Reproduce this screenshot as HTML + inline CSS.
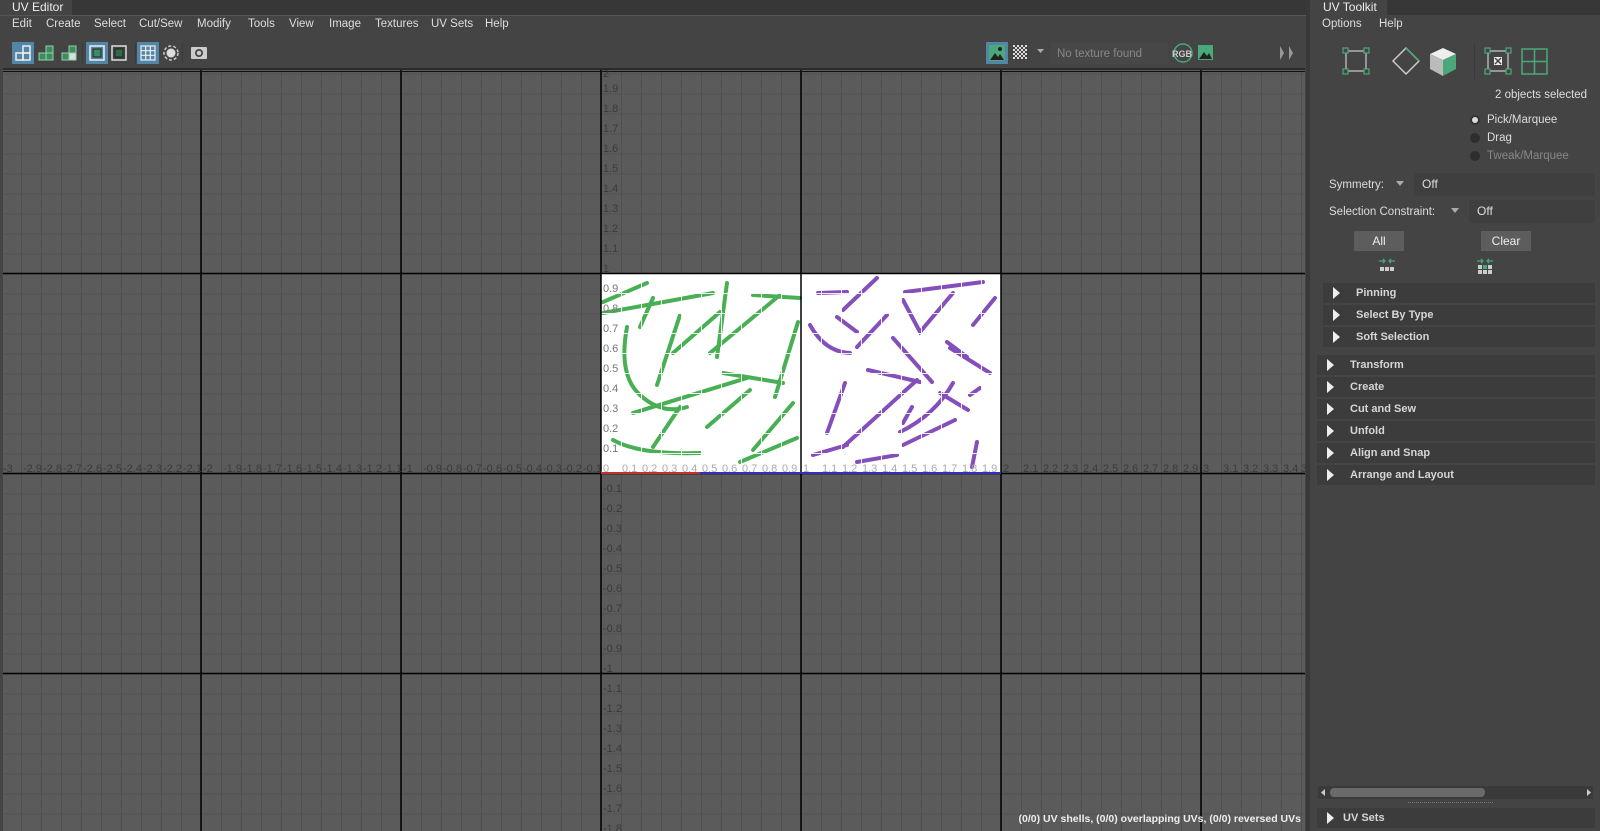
<!DOCTYPE html>
<html><head><meta charset="utf-8"><style>
*{margin:0;padding:0;box-sizing:border-box}
body{width:1600px;height:831px;overflow:hidden;background:#444;font-family:"Liberation Sans",sans-serif;font-size:12px;color:#ddd;position:relative}
.a{position:absolute}
.top{left:0;top:0;width:1600px;height:15px;background:#373737}
.tab{top:0;height:15px;background:#444;color:#eee;font-size:12px;line-height:15px;padding-left:12px}
.menu span{position:absolute;top:18px;font-size:11.5px;color:#ddd}
.row{position:absolute;height:20px;background:#3c3c3c;color:#d6d6d6;font-weight:bold;font-size:11px;line-height:20px}
.tri{position:absolute;top:4px;width:0;height:0;border-top:6px solid transparent;border-bottom:6px solid transparent;border-left:7px solid #eee}
.btn{position:absolute;top:231px;width:50px;height:20px;background:#5d5d5d;color:#eee;text-align:center;line-height:20px;font-size:12px}
.fld{position:absolute;background:#3f3f3f;color:#ddd;font-size:12px;padding-left:8px}
.rad{position:absolute;left:1470px;width:10px;height:10px;border-radius:5px;background:#2e2e2e}
.rl{position:absolute;left:1487px;font-size:11.5px}
</style></head><body>
<div class="a top"></div>
<div class="a tab" style="left:0;width:72px">UV Editor</div>
<div class="a tab" style="left:1310px;width:77px;padding-left:13px">UV Toolkit</div>
<div class="a" style="left:0;top:15px;width:1306px;height:1px;background:#555"></div>
<div class="menu">
<span style="left:12px">Edit</span><span style="left:46px">Create</span><span style="left:94px">Select</span><span style="left:139px">Cut/Sew</span><span style="left:197px">Modify</span><span style="left:248px">Tools</span><span style="left:289px">View</span><span style="left:329px">Image</span><span style="left:375px">Textures</span><span style="left:431px">UV Sets</span><span style="left:485px">Help</span>
<span style="left:1322px">Options</span><span style="left:1379px">Help</span>
</div>
<svg class="a" style="left:0;top:38px" width="1310" height="30">
<rect x="12" y="4" width="22" height="22" fill="#5285a6"/>
<g fill="none" stroke="#eee" stroke-width="1.5"><rect x="23" y="8" width="7" height="7"/><rect x="16" y="15" width="7" height="7"/><rect x="23" y="15" width="7" height="7"/></g>
<g fill="#3f8a5f" stroke="#8fd4a8" stroke-width="1"><rect x="46" y="8" width="7" height="7"/><rect x="39" y="15" width="7" height="7"/><rect x="46" y="15" width="7" height="7"/></g>
<g fill="#3f8a5f" stroke="#8fd4a8" stroke-width="1"><rect x="69" y="8" width="7" height="7"/><rect x="62" y="15" width="7" height="7"/><rect x="69" y="15" width="7" height="7" fill="#ddd"/></g>
<rect x="82" y="5" width="1" height="20" fill="#3a3a3a"/>
<rect x="86" y="4" width="22" height="22" fill="#5285a6"/>
<rect x="90" y="8" width="14" height="14" fill="none" stroke="#eee" stroke-width="1.5"/><rect x="93" y="11" width="8" height="8" fill="#3f8a5f" stroke="#222"/>
<rect x="112" y="8" width="14" height="14" fill="none" stroke="#ddd" stroke-width="1.5"/><rect x="115" y="11" width="8" height="8" fill="#2f6a4a" stroke="#222"/>
<rect x="135" y="5" width="1" height="20" fill="#3a3a3a"/>
<rect x="137" y="4" width="22" height="22" fill="#5285a6"/>
<g fill="none" stroke="#eee" stroke-width="1.2"><rect x="141" y="8" width="14" height="14"/><path d="M141 12.7h14M141 17.3h14M145.7 8v14M150.3 8v14"/></g>
<circle cx="171" cy="15" r="7" fill="none" stroke="#ccc" stroke-width="1.5" stroke-dasharray="3 2"/><circle cx="171" cy="15" r="4.5" fill="#ddd"/>
<rect x="182" y="5" width="1" height="20" fill="#3a3a3a"/>
<rect x="191" y="9" width="16" height="12" rx="1" fill="#ccc"/><circle cx="199" cy="15" r="4" fill="#444"/><circle cx="199" cy="15" r="2.3" fill="#ccc"/>
<rect x="986" y="4" width="22" height="22" fill="#5285a6"/><rect x="989" y="7" width="16" height="16" fill="#4aa87a"/><path d="M990 22l5-7 3 4 2-3 4 6z" fill="#222"/><circle cx="1000" cy="11" r="2" fill="#222"/>
<g fill="#ddd"><rect x="1013" y="7" width="15" height="15" fill="#444"/>
<path d="M1013 7h2v2h-2zM1017 7h2v2h-2zM1021 7h2v2h-2zM1025 7h2v2h-2zM1015 9h2v2h-2zM1019 9h2v2h-2zM1023 9h2v2h-2zM1013 11h2v2h-2zM1017 11h2v2h-2zM1021 11h2v2h-2zM1025 11h2v2h-2zM1015 13h2v2h-2zM1019 13h2v2h-2zM1023 13h2v2h-2zM1013 15h2v2h-2zM1017 15h2v2h-2zM1021 15h2v2h-2zM1025 15h2v2h-2zM1015 17h2v2h-2zM1019 17h2v2h-2zM1023 17h2v2h-2zM1013 19h2v2h-2zM1017 19h2v2h-2zM1021 19h2v2h-2zM1025 19h2v2h-2z"/></g>
<path d="M1037 11h7l-3.5 4z" fill="#aaa"/>
<rect x="1051" y="4" width="117" height="22" fill="#474747"/>
<text x="1057" y="19" font-size="11.5" fill="#888" font-family="Liberation Sans">No texture found</text>
<circle cx="1183" cy="15" r="9" fill="none" stroke="#4aa87a" stroke-width="1.5"/><text x="1172" y="19" font-size="9" font-weight="bold" fill="#ccc" font-family="Liberation Sans">RGB</text>
<rect x="1198" y="7" width="15" height="15" fill="#4aa87a"/><path d="M1199 21l5-7 3 4 2-3 3 6z" fill="#222"/>
<path d="M1280 8l4 7-4 7zM1289 8l4 7-4 7z" fill="#999"/>
</svg>
<div class="a" style="left:1306px;top:0;width:4px;height:831px;background:#383838"></div>
<svg class="a" style="left:0;top:0" width="1306" height="831" font-family="Liberation Sans" font-size="11">
<defs><pattern id="mg" x="1" y="13.5" width="20" height="20" patternUnits="userSpaceOnUse"><rect width="20" height="20" fill="#5b5b5b"/><path d="M0 0.5H20M0.5 0V20" stroke="#505050" stroke-width="1"/></pattern></defs>
<rect x="3" y="70" width="1302" height="761" fill="url(#mg)"/>
<rect x="601" y="273.5" width="400" height="200" fill="#fff"/>
<g fill="none" stroke-linecap="round" stroke-width="4" stroke="#3aa845" opacity="0.92">
<path d="M603 302L647 283M603 313L713 293M640 327L653 298M727 283L717 357M680 315L657 385M720 312L673 353M780 295L710 353M753 295L800 298M627 327Q618 375 640 395T687 407M633 413L747 378M723 373L783 383M798 322L775 397M707 427L750 390M613 440Q640 455 700 453M680 407L653 447M753 450L793 403M740 462L797 438"/>
</g>
<g fill="none" stroke-linecap="round" stroke-width="4" stroke="#7a3fb5" opacity="0.92">
<path d="M818 293L847 292M877 278L843 310M837 317L857 332M810 325Q825 352 850 353M887 315L857 347M905 292L983 282M903 300L920 332L953 293M995 298L973 325M893 338L932 382M868 370L920 382M947 342L967 357M950 348L990 373M845 383L827 433M917 380L843 447M813 455L847 445M953 383Q935 415 900 432M940 393L968 410M912 407L903 423M903 445L955 420M857 462L897 455M977 442L972 467M970 395L980 388"/>
</g>
<g stroke="#fff" stroke-width="1" opacity="0.9"><path d="M601 293.5H1001M601 313.5H1001M601 333.5H1001M601 353.5H1001M601 373.5H1001M601 393.5H1001M601 413.5H1001M601 433.5H1001M601 453.5H1001"/><path d="M621.5 273V473M641.5 273V473M661.5 273V473M681.5 273V473M701.5 273V473M721.5 273V473M741.5 273V473M761.5 273V473M781.5 273V473M821.5 273V473M841.5 273V473M861.5 273V473M881.5 273V473M901.5 273V473M921.5 273V473M941.5 273V473M961.5 273V473M981.5 273V473"/></g>
<path d="M601 273.5H1001" stroke="#222" stroke-dasharray="3 3"/>
<g stroke="#000" stroke-width="1.5"><path d="M201 70V831M401 70V831M601 70V831M801 70V831M1001 70V831M1201 70V831M3 273.5H1305M3 473.5H1305M3 673.5H1305"/></g>
<path d="M601 473H700" stroke="#c03030" stroke-width="2"/><path d="M700 473H1001" stroke="#3030c0" stroke-width="2"/>
<path d="M3 69H1305M3 71.5H1305" stroke="#111" stroke-width="1"/>
<g fill="#3b3b3b">
<text x="3" y="472">-3</text><text x="23" y="472">-2.9</text><text x="43" y="472">-2.8</text><text x="63" y="472">-2.7</text><text x="83" y="472">-2.6</text><text x="103" y="472">-2.5</text><text x="123" y="472">-2.4</text><text x="143" y="472">-2.3</text><text x="163" y="472">-2.2</text><text x="183" y="472">-2.1</text><text x="203" y="472">-2</text><text x="223" y="472">-1.9</text><text x="243" y="472">-1.8</text><text x="263" y="472">-1.7</text><text x="283" y="472">-1.6</text><text x="303" y="472">-1.5</text><text x="323" y="472">-1.4</text><text x="343" y="472">-1.3</text><text x="363" y="472">-1.2</text><text x="383" y="472">-1.1</text><text x="403" y="472">-1</text><text x="423" y="472">-0.9</text><text x="443" y="472">-0.8</text><text x="463" y="472">-0.7</text><text x="483" y="472">-0.6</text><text x="503" y="472">-0.5</text><text x="523" y="472">-0.4</text><text x="543" y="472">-0.3</text><text x="563" y="472">-0.2</text><text x="583" y="472">-0.1</text>
<g fill="#aaa"><text x="603" y="472">0</text><text x="622" y="472">0.1</text><text x="642" y="472">0.2</text><text x="662" y="472">0.3</text><text x="682" y="472">0.4</text><text x="702" y="472">0.5</text><text x="722" y="472">0.6</text><text x="742" y="472">0.7</text><text x="762" y="472">0.8</text><text x="782" y="472">0.9</text><text x="803" y="472">1</text><text x="822" y="472">1.1</text><text x="842" y="472">1.2</text><text x="862" y="472">1.3</text><text x="882" y="472">1.4</text><text x="902" y="472">1.5</text><text x="922" y="472">1.6</text><text x="942" y="472">1.7</text><text x="962" y="472">1.8</text><text x="982" y="472">1.9</text></g>
<text x="1003" y="472">2</text><text x="1023" y="472">2.1</text><text x="1043" y="472">2.2</text><text x="1063" y="472">2.3</text><text x="1083" y="472">2.4</text><text x="1103" y="472">2.5</text><text x="1123" y="472">2.6</text><text x="1143" y="472">2.7</text><text x="1163" y="472">2.8</text><text x="1183" y="472">2.9</text><text x="1203" y="472">3</text><text x="1223" y="472">3.1</text><text x="1243" y="472">3.2</text><text x="1263" y="472">3.3</text><text x="1283" y="472">3.4</text><text x="1301" y="472">3</text>
<text x="603" y="77">2</text><text x="603" y="92">1.9</text><text x="603" y="112">1.8</text><text x="603" y="132">1.7</text><text x="603" y="152">1.6</text><text x="603" y="172">1.5</text><text x="603" y="192">1.4</text><text x="603" y="212">1.3</text><text x="603" y="232">1.2</text><text x="603" y="252">1.1</text><text x="603" y="272">1</text>
<g fill="#777"><text x="603" y="292">0.9</text><text x="603" y="312">0.8</text><text x="603" y="332">0.7</text><text x="603" y="352">0.6</text><text x="603" y="372">0.5</text><text x="603" y="392">0.4</text><text x="603" y="412">0.3</text><text x="603" y="432">0.2</text><text x="603" y="452">0.1</text></g>
<text x="603" y="492">-0.1</text><text x="603" y="512">-0.2</text><text x="603" y="532">-0.3</text><text x="603" y="552">-0.4</text><text x="603" y="572">-0.5</text><text x="603" y="592">-0.6</text><text x="603" y="612">-0.7</text><text x="603" y="632">-0.8</text><text x="603" y="652">-0.9</text><text x="603" y="672">-1</text><text x="603" y="692">-1.1</text><text x="603" y="712">-1.2</text><text x="603" y="732">-1.3</text><text x="603" y="752">-1.4</text><text x="603" y="772">-1.5</text><text x="603" y="792">-1.6</text><text x="603" y="812">-1.7</text><text x="603" y="832">-1.8</text>
</g>
<text x="1301" y="822" text-anchor="end" font-size="10.5" font-weight="bold" fill="#eee">(0/0) UV shells, (0/0) overlapping UVs, (0/0) reversed UVs</text>
</svg>
<svg class="a" style="left:1310px;top:40px" width="290" height="45">
<g fill="none" stroke="#4aa87a" stroke-width="1.2"><rect x="36" y="11" width="20" height="20" stroke="#ccc"/><rect x="33" y="8" width="5" height="5" fill="#444"/><rect x="54" y="8" width="5" height="5" fill="#444"/><rect x="33" y="29" width="5" height="5" fill="#444"/><rect x="54" y="29" width="5" height="5" fill="#444"/></g>
<path d="M83 21L96 8L109 21L96 34Z" fill="none" stroke="#ccc" stroke-width="1.5"/><path d="M96 8L109 21" stroke="#4aa87a" stroke-width="1.5"/>
<path d="M120 14L133 8L146 14L133 20Z" fill="#eee"/><path d="M120 14V29L133 36V20Z" fill="#bbb"/><path d="M146 14V29L133 36V20Z" fill="#4aa87a"/>
<rect x="164" y="4" width="1" height="35" fill="#3a3a3a"/>
<g fill="none" stroke="#4aa87a" stroke-width="1.2"><rect x="178" y="11" width="20" height="20" stroke="#ccc"/><rect x="175" y="8" width="5" height="5" fill="#444"/><rect x="196" y="8" width="5" height="5" fill="#444"/><rect x="175" y="29" width="5" height="5" fill="#444"/><rect x="196" y="29" width="5" height="5" fill="#444"/></g>
<rect x="184" y="17" width="8" height="8" fill="#eee"/><path d="M185 18l6 6M191 18l-6 6" stroke="#444" stroke-width="1.5"/>
<g fill="none" stroke="#4aa87a" stroke-width="1.5"><rect x="212" y="9" width="25" height="25"/><path d="M224.5 9V34M212 21.5H237"/></g>
</svg>
<div class="a" style="left:1495px;top:89px;font-size:11.5px;color:#ddd">2 objects selected</div>
<div class="rad" style="top:115px;background:#ddd;border:2px solid #333"></div><div class="rl" style="top:114px">Pick/Marquee</div>
<div class="rad" style="top:133px"></div><div class="rl" style="top:132px">Drag</div>
<div class="rad" style="top:151px"></div><div class="rl" style="top:150px;color:#888">Tweak/Marquee</div>
<div class="a" style="left:1329px;top:179px;font-size:11.5px">Symmetry:</div>
<svg class="a" style="left:1396px;top:181px" width="10" height="6"><path d="M0 0h8l-4 5z" fill="#aaa"/></svg>
<div class="fld" style="left:1414px;top:173px;width:181px;height:23px;line-height:23px">Off</div>
<div class="a" style="left:1329px;top:206px;font-size:11.5px">Selection Constraint:</div>
<svg class="a" style="left:1451px;top:208px" width="10" height="6"><path d="M0 0h8l-4 5z" fill="#aaa"/></svg>
<div class="fld" style="left:1469px;top:200px;width:126px;height:23px;line-height:23px">Off</div>
<div class="btn" style="left:1354px">All</div><div class="btn" style="left:1481px">Clear</div>
<svg class="a" style="left:1378px;top:258px" width="20" height="16"><path d="M1 3h6M5 1l2 2-2 2M17 3h-6M13 1l-2 2 2 2" stroke="#4aa87a" stroke-width="1.3" fill="none"/><rect x="2" y="9" width="4" height="4" fill="#ccc"/><rect x="7" y="9" width="4" height="4" fill="#ccc"/><rect x="12" y="9" width="4" height="4" fill="#ccc"/></svg>
<svg class="a" style="left:1476px;top:258px" width="20" height="18"><path d="M1 3h6M5 1l2 2-2 2M17 3h-6M13 1l-2 2 2 2" stroke="#4aa87a" stroke-width="1.3" fill="none"/><rect x="2" y="7" width="4" height="4" fill="#ccc"/><rect x="7" y="7" width="4" height="4" fill="#4aa87a"/><rect x="12" y="7" width="4" height="4" fill="#ccc"/><rect x="2" y="12" width="4" height="4" fill="#ccc"/><rect x="7" y="12" width="4" height="4" fill="#ccc"/><rect x="12" y="12" width="4" height="4" fill="#ccc"/></svg>
<div class="row" style="left:1323px;top:283px;width:272px;padding-left:33px"><i class="tri" style="left:10px"></i>Pinning</div>
<div class="row" style="left:1323px;top:305px;width:272px;padding-left:33px"><i class="tri" style="left:10px"></i>Select By Type</div>
<div class="row" style="left:1323px;top:327px;width:272px;padding-left:33px"><i class="tri" style="left:10px"></i>Soft Selection</div>
<div class="row" style="left:1317px;top:355px;width:278px;padding-left:33px"><i class="tri" style="left:10px"></i>Transform</div>
<div class="row" style="left:1317px;top:377px;width:278px;padding-left:33px"><i class="tri" style="left:10px"></i>Create</div>
<div class="row" style="left:1317px;top:399px;width:278px;padding-left:33px"><i class="tri" style="left:10px"></i>Cut and Sew</div>
<div class="row" style="left:1317px;top:421px;width:278px;padding-left:33px"><i class="tri" style="left:10px"></i>Unfold</div>
<div class="row" style="left:1317px;top:443px;width:278px;padding-left:33px"><i class="tri" style="left:10px"></i>Align and Snap</div>
<div class="row" style="left:1317px;top:465px;width:278px;padding-left:33px"><i class="tri" style="left:10px"></i>Arrange and Layout</div>
<div class="a" style="left:1318px;top:786px;width:275px;height:13px;background:#3a3a3a"></div>
<div class="a" style="left:1330px;top:788px;width:155px;height:9px;border-radius:4px;background:#6a6a6a"></div>
<svg class="a" style="left:1319px;top:787px" width="274" height="11"><path d="M6 2v7l-4-3.5z M268 2v7l4-3.5z" fill="#ccc"/></svg>
<div class="a" style="left:1408px;top:802px;width:85px;border-top:1px dotted #777"></div>
<div class="row" style="left:1317px;top:808px;width:278px;padding-left:26px"><i class="tri" style="left:10px"></i>UV Sets</div>
</body></html>
